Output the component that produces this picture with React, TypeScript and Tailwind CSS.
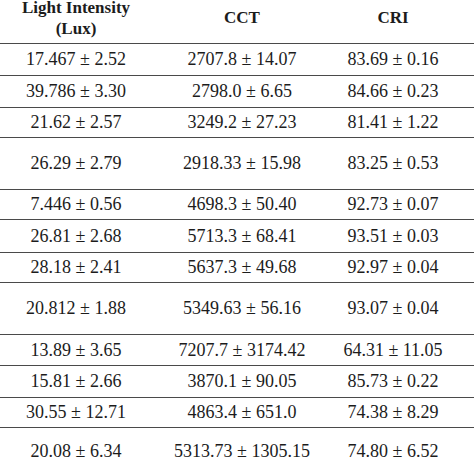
const rows: { h: number; lux: string; cct: string; cri: string }[] = [
  { h: 32, lux: '17.467 ± 2.52', cct: '2707.8 ± 14.07', cri: '83.69 ± 0.16' },
  { h: 32, lux: '39.786 ± 3.30', cct: '2798.0 ± 6.65', cri: '84.66 ± 0.23' },
  { h: 30, lux: '21.62 ± 2.57', cct: '3249.2 ± 27.23', cri: '81.41 ± 1.22' },
  { h: 52, lux: '26.29 ± 2.79', cct: '2918.33 ± 15.98', cri: '83.25 ± 0.53' },
  { h: 30, lux: '7.446 ± 0.56', cct: '4698.3 ± 50.40', cri: '92.73 ± 0.07' },
  { h: 33, lux: '26.81 ± 2.68', cct: '5713.3 ± 68.41', cri: '93.51 ± 0.03' },
  { h: 30, lux: '28.18 ± 2.41', cct: '5637.3 ± 49.68', cri: '92.97 ± 0.04' },
  { h: 52, lux: '20.812 ± 1.88', cct: '5349.63 ± 56.16', cri: '93.07 ± 0.04' },
  { h: 31, lux: '13.89 ± 3.65', cct: '7207.7 ± 3174.42', cri: '64.31 ± 11.05' },
  { h: 32, lux: '15.81 ± 2.66', cct: '3870.1 ± 90.05', cri: '85.73 ± 0.22' },
  { h: 30, lux: '30.55 ± 12.71', cct: '4863.4 ± 651.0', cri: '74.38 ± 8.29' },
  { h: 47, lux: '20.08 ± 6.34', cct: '5313.73 ± 1305.15', cri: '74.80 ± 6.52' },
];

const Cell = ({ children, w }: { children: React.ReactNode; w: string }) => (
  <div className={`${w} flex justify-center whitespace-pre`}>{children}</div>
);

export default function App() {
  return (
    <div
      className="w-[474px] h-[474px] overflow-hidden bg-white text-[#1c1c1c] text-[18px]"
      style={{ fontFamily: '"Liberation Serif", "Times New Roman", serif' }}
    >
      <div className="flex h-[43px] items-center pb-[8px] font-bold text-[17px] leading-[21px]">
        <div className="w-[152px] flex flex-col items-center">
          <span>Light Intensity</span>
          <span>(Lux)</span>
        </div>
        <Cell w="w-[180px]">CCT</Cell>
        <Cell w="w-[122px]">CRI</Cell>
      </div>
      {rows.map((r, i) => (
        <div
          key={i}
          className="flex items-center border-t border-[#4a4a4a] box-border"
          style={{ height: r.h }}
        >
          <Cell w="w-[152px]">{r.lux}</Cell>
          <Cell w="w-[180px]">{r.cct}</Cell>
          <Cell w="w-[122px]">{r.cri}</Cell>
        </div>
      ))}
    </div>
  );
}
